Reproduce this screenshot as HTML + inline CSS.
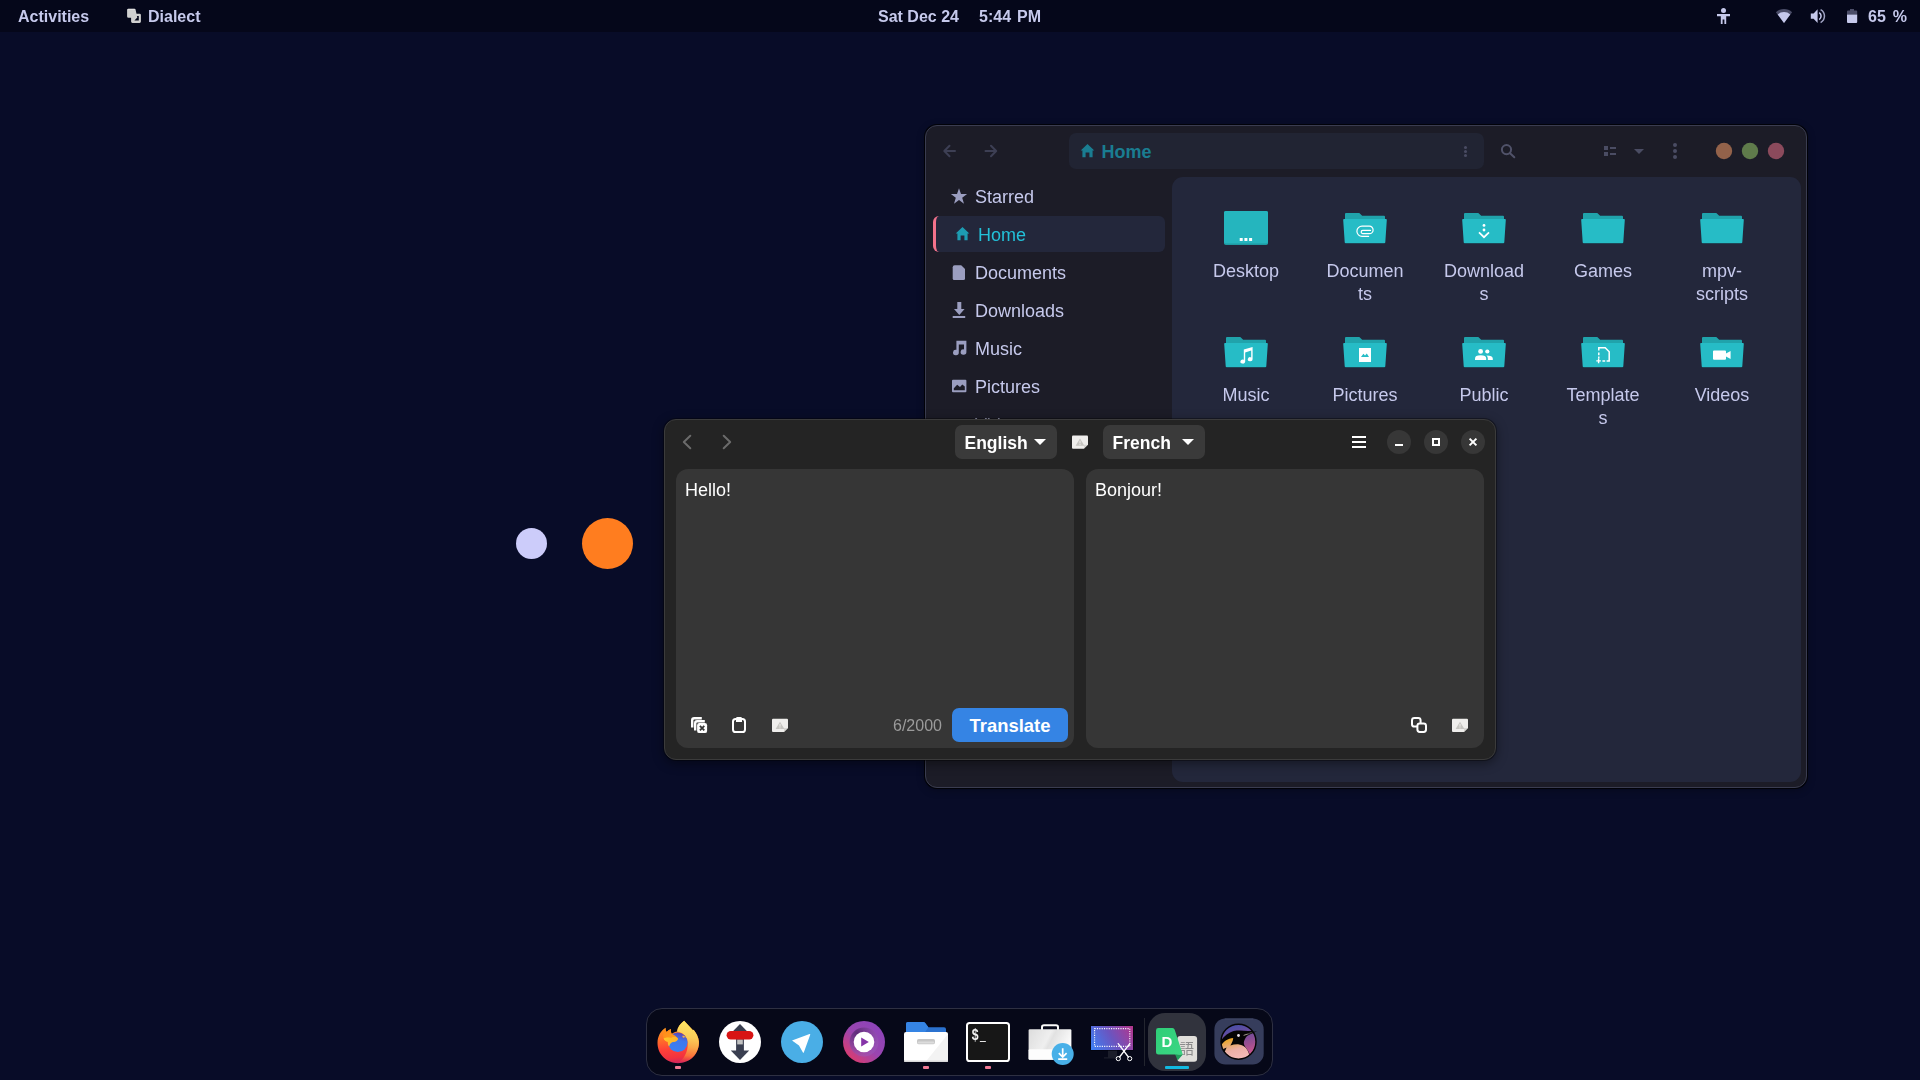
<!DOCTYPE html>
<html lang="en">
<head>
<meta charset="utf-8">
<title>Desktop</title>
<style>
*{box-sizing:border-box;margin:0;padding:0}
html,body{width:1920px;height:1080px;overflow:hidden;background:#080c28}
body{position:relative;font-family:"Liberation Sans","Noto Sans CJK JP",sans-serif;color:#c6c9ec;-webkit-font-smoothing:antialiased}
.abs{position:absolute}
svg{position:absolute;overflow:visible}
/* top bar */
#topbar{position:absolute;left:0;top:0;width:1920px;height:32px;background:#05071a}
#topbar .t{position:absolute;top:0;height:32px;line-height:34px;font-size:16px;font-weight:bold;color:#c6c9ec;white-space:nowrap}
/* wallpaper circles */
.c1{position:absolute;left:516px;top:528px;width:31px;height:31px;border-radius:50%;background:#ccccfa}
.c2{position:absolute;left:582px;top:518px;width:51px;height:51px;border-radius:50%;background:#ff7d1f}
/* files window */
#files{position:absolute;left:925px;top:125px;width:882px;height:663px;border-radius:12px;background:#1c1c27;border:1px solid #3a3c50;box-shadow:0 0 0 1px rgba(0,0,0,.75),0 2px 8px rgba(0,0,0,.3);overflow:hidden}
#files .inner{position:absolute;left:-926px;top:-126px;width:1920px;height:1080px}
#pathbar{position:absolute;left:1069px;top:133px;width:415px;height:36px;border-radius:7px;background:#212433}
#pane{position:absolute;left:1172px;top:177px;width:629px;height:605px;border-radius:11px;background:#23273b}
.srow{position:absolute;left:975px;height:36px;line-height:36px;font-size:18px;color:#c6c9ec;white-space:nowrap}
#sel{position:absolute;left:933px;top:216px;width:232px;height:36px;border-radius:6px;background:#23273b;border-left:3px solid #f2728b}
.lbl{position:absolute;width:110px;text-align:center;font-size:18px;line-height:23px;color:#c6c9ec}
/* dialect window */
#dialect{position:absolute;left:664px;top:419px;width:832px;height:341px;border-radius:12px;background:#242424;border:1px solid #3b3b3b;box-shadow:0 0 0 1px rgba(0,0,0,.35),0 3px 12px rgba(0,0,0,.45)}
.tpane{position:absolute;top:469px;width:398px;height:279px;border-radius:12px;background:#363636}
.lbtn{position:absolute;top:425px;height:34px;width:102px;border-radius:7px;background:#3a3a3a;color:#fff;font-weight:bold;font-size:17.5px;line-height:36px;white-space:nowrap}
.wb{position:absolute;top:430px;width:24px;height:24px;border-radius:50%;background:#373737}
.lbtn,.txt,.srow,.lbl,#topbar .t,.gs{will-change:transform}
.txt{position:absolute;font-size:18px;line-height:22px;color:#fff;white-space:nowrap}
/* dock */
#dock{position:absolute;left:646px;top:1008px;width:627px;height:68px;border-radius:16px;background:#060818;border:1px solid #2e3042}
.dot{position:absolute;top:1066px;width:6px;height:3px;border-radius:1px;background:#f27b96}
</style>
</head>
<body>
<!-- WALLPAPER -->
<div class="c1"></div><div class="c2"></div>

<!-- TOPBAR -->
<div id="topbar">
  <div class="t" style="left:18px">Activities</div>
  <div class="t" style="left:148px">Dialect</div>
  <div class="t" style="left:878px">Sat Dec 24</div>
  <div class="t" style="left:979px;word-spacing:1.5px">5:44 PM</div>
  <div class="t" style="left:1868px;word-spacing:2.5px">65 %</div>
  <!--TOP_START-->
  <svg style="left:0;top:0" width="1920" height="32" viewBox="0 0 1920 32" fill="none">
    <!-- dialect app symbolic -->
    <path d="M128.5 8.8H134.5Q135.4 8.8 135.6 9.7L136.5 13.8H139.6Q140.9 13.8 140.9 15.1V21.6Q140.9 22.9 139.6 22.9H132.4Q131.1 22.9 131.1 21.6V17.8H128.5Q127.1 17.8 127.1 16.5V10.1Q127.1 8.8 128.5 8.8Z" fill="#d0d0d0"/>
    <path d="M127.7 10.1Q127.7 9.4 128.5 9.4H134.4Q134.9 9.4 135 9.9" stroke="#e9e9e9" stroke-width=".8" fill="none"/>
    <path d="M136.9 16.1H138.8V20.6H134.4L137.3 17.5Z" fill="#05071a"/>
    <!-- accessibility -->
    <g fill="#c6c9ec">
      <circle cx="1723.5" cy="10.4" r="2.5"/>
      <path d="M1717 14H1730V16.2H1726.2V24H1724.4V19.6H1722.6V24H1720.8V16.2H1717Z"/>
    </g>
    <!-- wifi -->
    <path d="M1784 23L1775.9 12.2A11.6 11.6 0 0 1 1792.1 12.2Z" fill="#4b4d68"/>
    <path d="M1784 23L1777.7 14.6A9.2 9.2 0 0 1 1790.3 14.6Z" fill="#c6c9ec"/>
    <!-- volume -->
    <path d="M1810.8 13.4H1813.6L1817.6 9.2V23L1813.6 18.8H1810.8Z" fill="#c6c9ec"/>
    <path d="M1819.2 12.6A4.2 4.2 0 0 1 1819.2 19.6" stroke="#c6c9ec" stroke-width="1.5"/>
    <path d="M1820.6 9.6A7.4 7.4 0 0 1 1820.6 22.6" stroke="#c6c9ec" stroke-width="1.5" opacity=".8"/>
    <!-- battery -->
    <path d="M1850 9H1854V10.4H1856.2Q1857.2 10.4 1857.2 11.4V14.6H1847V11.4Q1847 10.4 1848 10.4H1850Z" fill="#4b4d68"/>
    <path d="M1847 14.6H1857.2V22Q1857.2 23 1856.2 23H1848Q1847 23 1847 22Z" fill="#c6c9ec"/>
  </svg>
  <!--TOP_END-->
</div>

<!-- FILES WINDOW -->
<div id="files"><div class="inner">
  <div id="pathbar"></div>
  <div id="pane"></div>
  <div id="sel"></div>
  <!-- header icons -->
  <svg style="left:0;top:0" width="1920" height="1080" viewBox="0 0 1920 1080" fill="none">
    <g stroke="#3d3f54" stroke-width="2" stroke-linecap="round" stroke-linejoin="round">
      <path d="M955 151H944.5M949.5 145.8L944.3 151L949.5 156.2"/>
      <path d="M985.5 151H996M991 145.8L996.2 151L991 156.2"/>
    </g>
    <!-- pathbar home icon -->
    <path d="M1087.5 144L1094.3 150.6H1092.6V157.2H1089.4V152.6H1085.6V157.2H1082.4V150.6H1080.7Z" fill="#1a7d91"/>
    <!-- pathbar dots -->
    <g fill="#4a4c63"><circle cx="1465.5" cy="147.5" r="1.5"/><circle cx="1465.5" cy="151.5" r="1.5"/><circle cx="1465.5" cy="155.5" r="1.5"/></g>
    <!-- search -->
    <g stroke="#505269" stroke-width="2" stroke-linecap="round"><circle cx="1506.5" cy="149.6" r="4.6"/><path d="M1510 153.2L1514.3 157.3"/></g>
    <!-- view list -->
    <g fill="#4a4c63"><rect x="1604" y="146" width="4" height="4"/><rect x="1604" y="152" width="4" height="4"/><rect x="1610" y="147" width="6" height="2"/><rect x="1610" y="153" width="6" height="2"/>
      <path d="M1634 149H1644L1639 154Z"/>
      <circle cx="1675" cy="145" r="2"/><circle cx="1675" cy="151" r="2"/><circle cx="1675" cy="157" r="2"/></g>
    <circle cx="1724" cy="151" r="8.2" fill="#93624a"/>
    <circle cx="1750" cy="151" r="8.2" fill="#5f7b4b"/>
    <circle cx="1776" cy="151" r="8.2" fill="#8b4a5c"/>
    <!-- sidebar icons -->
    <g fill="#9b9ec0">
      <path d="M959 188.3L961 194.1H967.1L962.2 197.8L964 203.7L959 200.1L954 203.7L955.8 197.8L950.9 194.1H957Z"/>
      <path d="M954.7 265.2H961.2L965 269V278.5Q965 280 963.5 280H954.2Q952.7 280 952.7 278.5V267.2Q952.7 265.2 954.7 265.2Z"/>
      <path d="M957.3 302H961.3V309H964.6L959.3 315L954 309H957.3ZM952.7 316H965.2V318H952.7Z"/>
      <path d="M956.4 340.8H966.4V352A2.9 2.7 0 1 1 964 349.4V344.4H958.8V352.4A2.9 2.7 0 1 1 956.4 349.8Z"/>
      <path fill-rule="evenodd" d="M953 379.8H965.4Q966.4 379.8 966.4 380.8V391.2Q966.4 392.2 965.4 392.2H953Q952 392.2 952 391.2V380.8Q952 379.8 953 379.8ZM953.8 390.2H964.8V386.6L962.3 384.4L960 387L957.2 384.8L953.8 388.2Z"/>
      <path d="M953 420H962Q963 420 963 421V423.5L966.4 421.5V429.5L963 427.5V430H952V421Q952 420 953 420Z"/>
    </g>
    <path d="M962.5 227L969.3 233.6H967.6V240.2H964.4V235.6H960.6V240.2H957.4V233.6H955.7Z" fill="#1d9cb2"/>
  </svg>
  <div class="abs" style="left:1101.5px;top:134px;height:36px;line-height:37px;font-size:18px;font-weight:bold;color:#1a7d91">Home</div>
  <div class="srow" style="top:179px">Starred</div>
  <div class="srow" style="top:217px;left:978px;color:#22c0d8">Home</div>
  <div class="srow" style="top:255px">Documents</div>
  <div class="srow" style="top:293px">Downloads</div>
  <div class="srow" style="top:331px">Music</div>
  <div class="srow" style="top:369px">Pictures</div>
  <div class="srow" style="top:407px">Videos</div>
  <!-- folder labels -->
  <div class="lbl" style="left:1191px;top:260px">Desktop</div>
  <div class="lbl" style="left:1310px;top:260px">Documen<br>ts</div>
  <div class="lbl" style="left:1429px;top:260px">Download<br>s</div>
  <div class="lbl" style="left:1548px;top:260px">Games</div>
  <div class="lbl" style="left:1667px;top:260px">mpv-<br>scripts</div>
  <div class="lbl" style="left:1191px;top:384px">Music</div>
  <div class="lbl" style="left:1310px;top:384px">Pictures</div>
  <div class="lbl" style="left:1429px;top:384px">Public</div>
  <div class="lbl" style="left:1548px;top:384px">Template<br>s</div>
  <div class="lbl" style="left:1667px;top:384px">Videos</div>
  <!--FOLDERS_START-->
  <svg style="left:0;top:0" width="1920" height="1080" viewBox="0 0 1920 1080" fill="none">
<rect x="1224" y="211" width="44" height="34" rx="1.8" fill="#1f9ba3"/><rect x="1224" y="211" width="44" height="32.6" rx="1.8" fill="#25b5be"/><g fill="#fff"><rect x="1239.7" y="238" width="3" height="3"/><rect x="1244.4" y="238" width="3" height="3"/><rect x="1249.1" y="238" width="3" height="3"/></g>
<path d="M1346 213H1359.3L1362.2 215.8H1384Q1385 215.8 1385 216.8V242H1345V214Q1345 213 1346 213Z" fill="#20a3ab"/><path d="M1345 243.2H1385V244H1345Z" fill="#15161f" opacity=".45"/><path d="M1344 219H1386Q1386.9 219 1386.8 220L1385.3 242.3Q1385.2 243.2 1384.4 243.2H1345.6Q1344.8 243.2 1344.7 242.3L1343.2 220Q1343.1 219 1344 219Z" fill="#26bcc6"/><g stroke="#fff" stroke-width="1.2" fill="none" stroke-linecap="round"><path d="M1370.5 230.4H1362.8A1.6 1.6 0 0 0 1362.8 233.6H1369.4A3.7 3.7 0 0 0 1369.4 226.2H1362A5.1 5.1 0 0 0 1362 236.4H1368.6"/></g>
<path d="M1465 213H1478.3L1481.2 215.8H1503Q1504 215.8 1504 216.8V242H1464V214Q1464 213 1465 213Z" fill="#20a3ab"/><path d="M1464 243.2H1504V244H1464Z" fill="#15161f" opacity=".45"/><path d="M1463 219H1505Q1505.9 219 1505.8 220L1504.3 242.3Q1504.2 243.2 1503.4 243.2H1464.6Q1463.8 243.2 1463.7 242.3L1462.2 220Q1462.1 219 1463 219Z" fill="#26bcc6"/><g fill="#fff"><circle cx="1484" cy="225.4" r="1.4"/><circle cx="1484" cy="230" r="1.4"/></g><path d="M1479 232.4L1484 237.2L1489 232.4" stroke="#fff" stroke-width="1.7" fill="none"/>
<path d="M1584 213H1597.3L1600.2 215.8H1622Q1623 215.8 1623 216.8V242H1583V214Q1583 213 1584 213Z" fill="#20a3ab"/><path d="M1583 243.2H1623V244H1583Z" fill="#15161f" opacity=".45"/><path d="M1582 219H1624Q1624.9 219 1624.8 220L1623.3 242.3Q1623.2 243.2 1622.4 243.2H1583.6Q1582.8 243.2 1582.7 242.3L1581.2 220Q1581.1 219 1582 219Z" fill="#26bcc6"/>
<path d="M1703 213H1716.3L1719.2 215.8H1741Q1742 215.8 1742 216.8V242H1702V214Q1702 213 1703 213Z" fill="#20a3ab"/><path d="M1702 243.2H1742V244H1702Z" fill="#15161f" opacity=".45"/><path d="M1701 219H1743Q1743.9 219 1743.8 220L1742.3 242.3Q1742.2 243.2 1741.4 243.2H1702.6Q1701.8 243.2 1701.7 242.3L1700.2 220Q1700.1 219 1701 219Z" fill="#26bcc6"/>
<path d="M1227 337H1240.3L1243.2 339.8H1265Q1266 339.8 1266 340.8V366H1226V338Q1226 337 1227 337Z" fill="#20a3ab"/><path d="M1226 367.2H1266V368H1226Z" fill="#15161f" opacity=".45"/><path d="M1225 343H1267Q1267.9 343 1267.8 344L1266.3 366.3Q1266.2 367.2 1265.4 367.2H1226.6Q1225.8 367.2 1225.7 366.3L1224.2 344Q1224.1 343 1225 343Z" fill="#26bcc6"/><path d="M1243.8 349.6L1252.6 347V359.2A2.4 2 0 1 1 1251.2 357.4V350.6L1245.2 352.4V361.6A2.4 2 0 1 1 1243.8 359.8Z" fill="#fff"/>
<path d="M1346 337H1359.3L1362.2 339.8H1384Q1385 339.8 1385 340.8V366H1345V338Q1345 337 1346 337Z" fill="#20a3ab"/><path d="M1345 367.2H1385V368H1345Z" fill="#15161f" opacity=".45"/><path d="M1344 343H1386Q1386.9 343 1386.8 344L1385.3 366.3Q1385.2 367.2 1384.4 367.2H1345.6Q1344.8 367.2 1344.7 366.3L1343.2 344Q1343.1 343 1344 343Z" fill="#26bcc6"/><path fill-rule="evenodd" d="M1359 348H1371V362H1359ZM1361 357H1369L1366.8 353.4L1365 355.6L1363.4 353.8Z" fill="#fff"/>
<path d="M1465 337H1478.3L1481.2 339.8H1503Q1504 339.8 1504 340.8V366H1464V338Q1464 337 1465 337Z" fill="#20a3ab"/><path d="M1464 367.2H1504V368H1464Z" fill="#15161f" opacity=".45"/><path d="M1463 343H1505Q1505.9 343 1505.8 344L1504.3 366.3Q1504.2 367.2 1503.4 367.2H1464.6Q1463.8 367.2 1463.7 366.3L1462.2 344Q1462.1 343 1463 343Z" fill="#26bcc6"/><g fill="#fff"><circle cx="1480.6" cy="351.4" r="2.4"/><circle cx="1487.3" cy="351.5" r="2.1"/><path d="M1475 360V358.4Q1475 355.2 1480.6 355.2Q1486.2 355.2 1486.2 358.4V360Z"/><path d="M1487.8 360V358.2Q1487.8 356.4 1486.4 355.4Q1492.8 355.4 1492.8 358.4V360Z"/></g>
<path d="M1584 337H1597.3L1600.2 339.8H1622Q1623 339.8 1623 340.8V366H1583V338Q1583 337 1584 337Z" fill="#20a3ab"/><path d="M1583 367.2H1623V368H1583Z" fill="#15161f" opacity=".45"/><path d="M1582 343H1624Q1624.9 343 1624.8 344L1623.3 366.3Q1623.2 367.2 1622.4 367.2H1583.6Q1582.8 367.2 1582.7 366.3L1581.2 344Q1581.1 343 1582 343Z" fill="#26bcc6"/><g stroke="#fff" stroke-width="1.5" fill="none"><path d="M1598.8 350.6V347.8H1605.2L1609.2 351.8V361H1606.6"/><path d="M1598.8 352.4V355.2M1598.8 356.6V358.4M1602.4 361H1605.2"/><path d="M1598.6 358.6V363.2M1596.3 360.9H1600.9" stroke-width="1.4"/></g>
<path d="M1703 337H1716.3L1719.2 339.8H1741Q1742 339.8 1742 340.8V366H1702V338Q1702 337 1703 337Z" fill="#20a3ab"/><path d="M1702 367.2H1742V368H1702Z" fill="#15161f" opacity=".45"/><path d="M1701 343H1743Q1743.9 343 1743.8 344L1742.3 366.3Q1742.2 367.2 1741.4 367.2H1702.6Q1701.8 367.2 1701.7 366.3L1700.2 344Q1700.1 343 1701 343Z" fill="#26bcc6"/><path d="M1714 350.4H1725Q1726 350.4 1726 351.4V353.6L1730.6 351V359L1726 356.4V358.8Q1726 359.8 1725 359.8H1714Q1713 359.8 1713 358.8V351.4Q1713 350.4 1714 350.4Z" fill="#fff"/>
</svg>
  <!--FOLDERS_END-->
</div></div>

<!-- DIALECT WINDOW -->
<div id="dialect"></div>
<div class="tpane" style="left:676px"></div>
<div class="tpane" style="left:1086px"></div>
<!--DIALECT_START-->
<div class="lbtn" style="left:955px;padding-left:9.5px">English</div>
<div class="lbtn" style="left:1103px;padding-left:9.5px">French</div>
<svg style="left:0;top:0" width="1920" height="1080" viewBox="0 0 1920 1080" fill="none">
  <g stroke="#6b6b6b" stroke-width="2" stroke-linecap="round" stroke-linejoin="round">
    <path d="M690.3 435.8L683.8 442L690.3 448.2"/><path d="M723.7 435.8L730.2 442L723.7 448.2"/>
  </g>
  <!-- hamburger -->
  <g fill="#fff"><rect x="1352" y="436" width="14" height="2"/><rect x="1352" y="441" width="14" height="2"/><rect x="1352" y="446" width="14" height="2"/></g>
  <!-- window buttons -->
  <g fill="#373737"><circle cx="1399" cy="442" r="12"/><circle cx="1436" cy="442" r="12"/><circle cx="1473" cy="442" r="12"/></g>
  <rect x="1395" y="444" width="8" height="2" fill="#fff"/>
  <rect x="1433" y="439" width="6" height="6" stroke="#fff" stroke-width="2"/>
  <path d="M1469.6 438.6L1476.4 445.4M1476.4 438.6L1469.6 445.4" stroke="#fff" stroke-width="2"/>
  <!-- dropdown triangles -->
  <path d="M1034 439H1046L1040 445Z" fill="#fff"/><path d="M1182 439H1194L1188 445Z" fill="#fff"/>
  <!-- flag icons -->
  <g id="flag1"><path d="M1073 435.5H1087Q1088 435.5 1088 436.5V444.6L1083.8 448.8H1073Q1072 448.8 1072 447.8V436.5Q1072 435.5 1073 435.5Z" fill="#efeeec"/><path d="M1080 438.4L1084.4 445.8H1075.6Z" fill="#c6c5c1"/><rect x="1079.5" y="440.6" width="1" height="2.8" fill="#efeeec"/><rect x="1079.5" y="444.1" width="1" height="1" fill="#efeeec"/><path d="M1084 448.6L1087.9 444.7H1084Z" fill="#d6d5d2"/></g>
  <g transform="translate(-300 283.3)"><path d="M1073 435.5H1087Q1088 435.5 1088 436.5V444.6L1083.8 448.8H1073Q1072 448.8 1072 447.8V436.5Q1072 435.5 1073 435.5Z" fill="#efeeec"/><path d="M1080 438.4L1084.4 445.8H1075.6Z" fill="#c6c5c1"/><rect x="1079.5" y="440.6" width="1" height="2.8" fill="#efeeec"/><rect x="1079.5" y="444.1" width="1" height="1" fill="#efeeec"/><path d="M1084 448.6L1087.9 444.7H1084Z" fill="#d6d5d2"/></g>
  <g transform="translate(380 283.3)"><path d="M1073 435.5H1087Q1088 435.5 1088 436.5V444.6L1083.8 448.8H1073Q1072 448.8 1072 447.8V436.5Q1072 435.5 1073 435.5Z" fill="#efeeec"/><path d="M1080 438.4L1084.4 445.8H1075.6Z" fill="#c6c5c1"/><rect x="1079.5" y="440.6" width="1" height="2.8" fill="#efeeec"/><rect x="1079.5" y="444.1" width="1" height="1" fill="#efeeec"/><path d="M1084 448.6L1087.9 444.7H1084Z" fill="#d6d5d2"/></g>
  <!-- clear icon -->
  <g>
    <path d="M692.2 727.4V720.2Q692.2 718.2 694.2 718.2H701.8" stroke="#fff" stroke-width="2.4"/>
    <path d="M695.2 730.4V723.2Q695.2 721.2 697.2 721.2H704.8" stroke="#fff" stroke-width="2.4"/>
    <rect x="697.1" y="723.1" width="10" height="10" rx="2.2" fill="#fff"/>
    <path d="M699.9 725.9L704.3 730.3M704.3 725.9L699.9 730.3" stroke="#363636" stroke-width="1.8"/>
  </g>
  <!-- paste icon -->
  <rect x="733" y="719" width="12" height="13" rx="2.6" stroke="#fff" stroke-width="2"/>
  <path d="M736 718.4Q736 717 737.4 717H740.6Q742 717 742 718.4V722H736Z" fill="#fff"/>
  <!-- copy icon -->
  <rect x="1412" y="718" width="8.6" height="8.6" rx="2.4" stroke="#fff" stroke-width="2"/>
  <rect x="1417.4" y="723.4" width="8.6" height="8.6" rx="2.4" stroke="#fff" stroke-width="2" fill="#363636"/>
</svg>
<div class="txt" style="left:685px;top:479px">Hello!</div>
<div class="txt" style="left:1095px;top:479px">Bonjour!</div>
<div class="abs" style="left:893px;top:708px;height:34px;line-height:36px;font-size:16px;color:#9b9b9b;white-space:nowrap">6/2000</div>
<div class="abs" style="left:952px;top:708px;width:116px;height:34px;border-radius:7px;background:#3584e4;color:#fff;font-weight:bold;font-size:18.4px;line-height:36px;text-align:center;white-space:nowrap">Translate</div>
<!--DIALECT_END-->

<!-- DOCK -->
<div id="dock"></div>
<!--DOCK_START-->
<div class="abs" style="left:1148px;top:1013px;width:58px;height:58px;border-radius:17px;background:#31333d"></div>
<div class="abs" style="left:1144px;top:1018px;width:1px;height:48px;background:#23252f"></div>
<div class="dot" style="left:675px"></div><div class="dot" style="left:923px"></div><div class="dot" style="left:985px"></div>
<div class="abs" style="left:1165px;top:1066px;width:24px;height:3px;border-radius:1px;background:#12b9e0"></div>
<svg style="left:0;top:0" width="1920" height="1080" viewBox="0 0 1920 1080" fill="none">
<defs>
  <linearGradient id="ffb" x1="670" y1="1026" x2="674" y2="1063.5" gradientUnits="userSpaceOnUse"><stop offset="0" stop-color="#ff9d1c"/><stop offset=".3" stop-color="#ff7826"/><stop offset=".62" stop-color="#ff4038"/><stop offset=".85" stop-color="#f2323f"/><stop offset="1" stop-color="#cf2560"/></linearGradient>
  <linearGradient id="fff" x1="690" y1="1021" x2="684" y2="1064" gradientUnits="userSpaceOnUse"><stop offset="0" stop-color="#ffe866"/><stop offset=".38" stop-color="#fbcd58"/><stop offset=".6" stop-color="#f9a848"/><stop offset=".8" stop-color="#fb7a3a" stop-opacity=".9"/><stop offset="1" stop-color="#f0403e" stop-opacity="0"/></linearGradient>
  <linearGradient id="ffg" x1="681" y1="1032.5" x2="676" y2="1052" gradientUnits="userSpaceOnUse"><stop offset="0" stop-color="#5e3fae"/><stop offset=".4" stop-color="#3f78ec"/><stop offset="1" stop-color="#3a80f2"/></linearGradient>
  <linearGradient id="ffh" x1="664" y1="1038" x2="678" y2="1042" gradientUnits="userSpaceOnUse"><stop offset="0" stop-color="#ffc828"/><stop offset="1" stop-color="#ffb02a"/></linearGradient><linearGradient id="ffe" x1="665" y1="1028" x2="676" y2="1039" gradientUnits="userSpaceOnUse"><stop offset="0" stop-color="#ff8a1a"/><stop offset="1" stop-color="#ff9f1e"/></linearGradient>
  <linearGradient id="cel" x1="878" y1="1028" x2="850" y2="1058" gradientUnits="userSpaceOnUse"><stop offset="0" stop-color="#8e44b8"/><stop offset=".5" stop-color="#9a45b0"/><stop offset="1" stop-color="#d83c72"/></linearGradient>
  <radialGradient id="celi" cx="857" cy="1033" r="24" gradientUnits="userSpaceOnUse"><stop offset="0" stop-color="#5f2a78"/><stop offset="1" stop-color="#9a58b8" stop-opacity=".55"/></radialGradient>
  <linearGradient id="bag" x1="1030" y1="1030" x2="1068" y2="1050" gradientUnits="userSpaceOnUse"><stop offset="0" stop-color="#dedede"/><stop offset=".45" stop-color="#efefef"/><stop offset=".55" stop-color="#e2e2e2"/><stop offset="1" stop-color="#fdfdfd"/></linearGradient>
  <linearGradient id="scr" x1="1091" y1="1050" x2="1133" y2="1026" gradientUnits="userSpaceOnUse"><stop offset="0" stop-color="#3b82f6"/><stop offset=".5" stop-color="#6a55c0"/><stop offset="1" stop-color="#b5358c"/></linearGradient>
  <linearGradient id="pen" x1="1236" y1="1024" x2="1246" y2="1060" gradientUnits="userSpaceOnUse"><stop offset="0" stop-color="#474fa8"/><stop offset=".3" stop-color="#6f4c9c"/><stop offset=".6" stop-color="#9a4f90"/><stop offset=".85" stop-color="#c9558e"/><stop offset="1" stop-color="#e06aa0"/></linearGradient>
  <linearGradient id="belly" x1="1230" y1="1038" x2="1236" y2="1060" gradientUnits="userSpaceOnUse"><stop offset="0" stop-color="#e9a61e"/><stop offset=".3" stop-color="#e8aa6a"/><stop offset=".55" stop-color="#ecb0a6"/><stop offset="1" stop-color="#f4bab8"/></linearGradient>
  <linearGradient id="grn" x1="1156" y1="1028" x2="1182" y2="1054" gradientUnits="userSpaceOnUse"><stop offset="0" stop-color="#2fce78"/><stop offset="1" stop-color="#3bd683"/></linearGradient>
  <clipPath id="pclip"><circle cx="1238.5" cy="1041.7" r="17.4"/></clipPath>
  <clipPath id="ffclip"><circle cx="678" cy="1042.5" r="9.8"/></clipPath>
</defs>
<!-- firefox -->
<g>
  <path d="M684.1 1020.8L693 1030.3L693.6 1029.8C696 1033 698.6 1037 698.9 1041.5C699.3 1047 697 1053 693 1057C689 1061 683.5 1063.2 678 1063.2C666.5 1063.2 657.5 1054.2 657.5 1043C657.5 1036.5 660.5 1031 665.6 1027.8C665.4 1029.4 665.8 1030.8 666.6 1031.9C667.8 1030.6 669.2 1029.6 670.9 1029C670.7 1030.8 671 1032.4 671.6 1033.8C673.5 1032.6 675.5 1031.9 677.1 1031.6C677.5 1027.5 680 1023.8 684.1 1020.8Z" fill="url(#ffb)"/>
  <path d="M684.1 1020.8L693 1030.3L693.6 1029.8C696 1033 698.6 1037 698.9 1041.5C699.3 1047 697 1053 693 1057C689 1061 683.5 1063.2 678 1063.2C684 1059 687.8 1052 687.8 1044C687.6 1038 684 1033.4 679.5 1032L677.1 1031.6C677.5 1027.5 680 1023.8 684.1 1020.8Z" fill="url(#fff)"/>
  <circle cx="677.8" cy="1042.3" r="9.75" fill="url(#ffg)"/>
  <path d="M682.2 1035.8C683.6 1035.6 685 1036.2 685.9 1037.3C684.8 1037 683.8 1037.2 683 1037.8Z" fill="#f6b643"/>
  <path d="M665.6 1027.8C665.4 1029.4 665.8 1030.8 666.6 1031.9C667.8 1030.6 669.2 1029.6 670.9 1029C670.7 1030.8 671 1032.4 671.6 1033.8C674.2 1034.8 676.6 1036.6 677.9 1038.9L663.6 1038.6C662.4 1035 663.2 1030.8 665.6 1027.8Z" fill="url(#ffe)"/>
  <path d="M663.6 1038.6C666 1037.2 669 1037.4 671.5 1038C674 1037 676.5 1037.6 677.9 1038.9C677.6 1040.8 675.5 1041.8 673 1042C670.5 1042.4 669.2 1044 668.9 1046.2C667.8 1044.8 667.6 1043 668 1041.6C666 1041.4 664.4 1040.2 663.6 1038.6Z" fill="url(#ffh)"/>
</g>
  <path d="M663.7 1038.7C666 1037.4 669 1037.6 671 1038C673.5 1036.5 676.5 1036.8 678 1038.4C677.5 1040.5 675.5 1041.5 673 1041.7C671 1042.2 669.5 1044 669.3 1046.5C668.5 1045 668.3 1043.5 668.8 1042C666.5 1041.8 664.5 1040.5 663.7 1038.7Z" fill="url(#ffh)"/>
</g>
<!-- transmission -->
<g>
  <circle cx="740" cy="1042" r="21" fill="#fff"/>
  <path d="M740 1024L747.3 1031.6H732.7Z" fill="#3a3f50"/>
  <rect x="736.1" y="1038" width="7.8" height="13" fill="#3a3f50"/>
  <rect x="737.2" y="1039.4" width="5.6" height="5" fill="#c2c2c2"/>
  <path d="M730.8 1050.4H749.2L740 1060Z" fill="#3a3f50"/>
  <rect x="726.6" y="1031" width="26.8" height="8.4" rx="4.2" fill="#d81414"/>
</g>
<!-- telegram -->
<circle cx="802" cy="1042" r="21" fill="#4aaee6"/>
<path d="M792 1040.6L809.6 1034Q810.5 1033.8 810.2 1034.8L803.9 1052.2Q803.4 1053.2 802.8 1052.2L799 1045.4Z" fill="#fff"/>
<!-- celluloid -->
<circle cx="864" cy="1042" r="21" fill="url(#cel)"/>
<circle cx="864" cy="1042" r="14.4" fill="url(#celi)"/>
<circle cx="864" cy="1042" r="10.3" fill="#fff"/>
<path d="M861.2 1037.6L868.8 1042L861.2 1046.4Z" fill="#8634a8"/>
<!-- files -->
<g>
  <path d="M906 1024Q906 1022 908 1022H923.3Q924.3 1022 925 1022.8L928.4 1027.3H944Q946 1027.3 946 1029.3V1033H906Z" fill="#2b72cf"/>
  <path d="M906 1024Q906 1022 908 1022H923.3Q924.3 1022 925 1022.8L928.4 1027.3L924.5 1033H906Z" fill="#3584e4"/>
  <rect x="904" y="1032" width="44" height="30" rx="2" fill="#fff"/>
  <path d="M948 1034V1060Q948 1062 946 1062H925.5Z" fill="#f3f3f3"/>
  <rect x="904" y="1060.6" width="44" height="1.4" rx=".7" fill="#d9d9d9"/>
  <rect x="917" y="1039" width="18" height="5.2" rx="1.6" fill="#c6c6c6"/><rect x="917.6" y="1041.6" width="16.8" height="2" rx="1" fill="#dcdcdc"/>
</g>
<!-- terminal -->
<rect x="967" y="1023" width="42" height="38" rx="2.6" fill="#171717" stroke="#fff" stroke-width="2"/>
<text transform="translate(971.4 1039.9) scale(.74 1)" style="font-family:'Liberation Mono',monospace;font-weight:bold;font-size:16.5px" fill="#f4f4f4">$</text><text transform="translate(979.9 1038.9) scale(.45 1)" style="font-family:'Liberation Sans',sans-serif;font-weight:bold;font-size:23px" fill="#f4f4f4">_</text>
<!-- software -->
<g>
  <path d="M1042 1030V1027Q1042 1025.2 1044 1025.2H1056Q1058 1025.2 1058 1027V1030" stroke="#fafafa" stroke-width="2"/>
  <rect x="1028.6" y="1029.2" width="42.8" height="30.6" rx="1.2" fill="url(#bag)"/>
  <rect x="1028.6" y="1049.2" width="42.8" height="10.6" rx="1" fill="#fdfdfd"/>
  <circle cx="1062.7" cy="1054" r="11" fill="#48b0e8"/>
  <path d="M1062.7 1048.2V1056.8M1058.8 1053.2L1062.7 1057L1066.6 1053.2M1058.2 1059.2H1067.2" stroke="#fff" stroke-width="1.7"/>
</g>
<!-- screenshot -->
<g>
  <path d="M1108 1050H1117V1057.2H1120V1058.6H1104V1057.2H1108Z" fill="#1b1d2a"/>
  <rect x="1090.4" y="1025.4" width="43.2" height="25.2" fill="#02030c"/>
  <rect x="1091" y="1026" width="42" height="24" fill="url(#scr)"/>
  <rect x="1094.6" y="1028.6" width="35.2" height="17.8" stroke="#fff" stroke-width="1.1" stroke-dasharray="1.1 1.25"/>
  <path d="M1118.2 1043.6L1128.4 1057M1129.8 1043.6L1119.6 1057" stroke="#fff" stroke-width="1.3" stroke-linecap="round"/>
  <circle cx="1118.3" cy="1058.6" r="2.1" stroke="#fff" stroke-width="1"/><circle cx="1129.7" cy="1058.6" r="2.1" stroke="#fff" stroke-width="1"/>
</g>
<!-- dialect -->
<g>
  <rect x="1177.3" y="1036" width="19.8" height="25.8" rx="3" fill="#e1dfdb"/>
  <text class="gs" x="1179.4" y="1053.7" font-family="'Liberation Sans','Noto Sans CJK JP',sans-serif" font-size="14.5" fill="#8b8b8b">語</text>
  <path d="M1175 1054L1182.8 1054.6L1177.6 1060.6Z" fill="#1f9d5a"/>
  <path d="M1158.4 1028H1172.4Q1174.2 1028 1174.7 1029.8L1182.8 1054.6H1158.4Q1156 1054.6 1156 1052.2V1030.4Q1156 1028 1158.4 1028Z" fill="url(#grn)"/>
  <text class="gs" x="1161.6" y="1046.8" font-family="'Liberation Sans',sans-serif" font-weight="bold" font-size="15" fill="#fff">D</text>
</g>
<!-- penguin -->
<g>
  <rect x="1214.4" y="1018.4" width="49.3" height="46" rx="11" fill="#363d5c"/>
  <path d="M1225 1018.9H1253" stroke="#4a5170" stroke-width="1" stroke-linecap="round" opacity=".7"/>
  <circle cx="1238.5" cy="1041.7" r="17.4" fill="url(#pen)"/>
  <g clip-path="url(#pclip)">
    <path d="M1219 1043.4C1222.4 1037.4 1227.6 1033 1233.6 1031.1C1238 1030.2 1243 1030.6 1248 1031L1257 1030.8L1247 1036C1245 1038.5 1243.8 1041 1243.8 1043C1244 1045 1245 1046.6 1246.4 1048.4C1249 1051.5 1250.4 1055 1250.6 1059L1240 1063L1224 1058Z" fill="#050505"/>
    <path d="M1221.4 1045.4C1223.6 1041.4 1228 1038.4 1233.2 1038.1C1233.2 1040.6 1231.8 1043.4 1230.3 1045.6C1233 1044.6 1236 1044.2 1239 1044.4C1242 1044.8 1244.4 1046 1245.7 1047.8C1248.4 1051 1249.6 1054.6 1249.6 1058.5L1240 1062L1228 1059L1224.4 1052.5L1226.6 1047.6L1222.2 1049.6Z" fill="url(#belly)"/>
    <circle cx="1238.5" cy="1035.5" r="1.4" fill="#e9e1ea"/>
    <path d="M1243.6 1035.4L1253 1032.2" stroke="#e8d8c8" stroke-width=".7"/>
    <path d="M1249 1055C1250.5 1053.5 1252.5 1052.6 1254.5 1052.6L1251 1058Z" fill="#e070b8" opacity=".7"/>
  </g>
  <circle cx="1238.5" cy="1041.7" r="17.5" stroke="#050505" stroke-width="1.4"/>
  <path d="M1246 1033.8L1257.2 1030.9L1252 1033.4Z" fill="#050505"/>
</g>
</svg>
<!--DOCK_END-->
</body>
</html>
